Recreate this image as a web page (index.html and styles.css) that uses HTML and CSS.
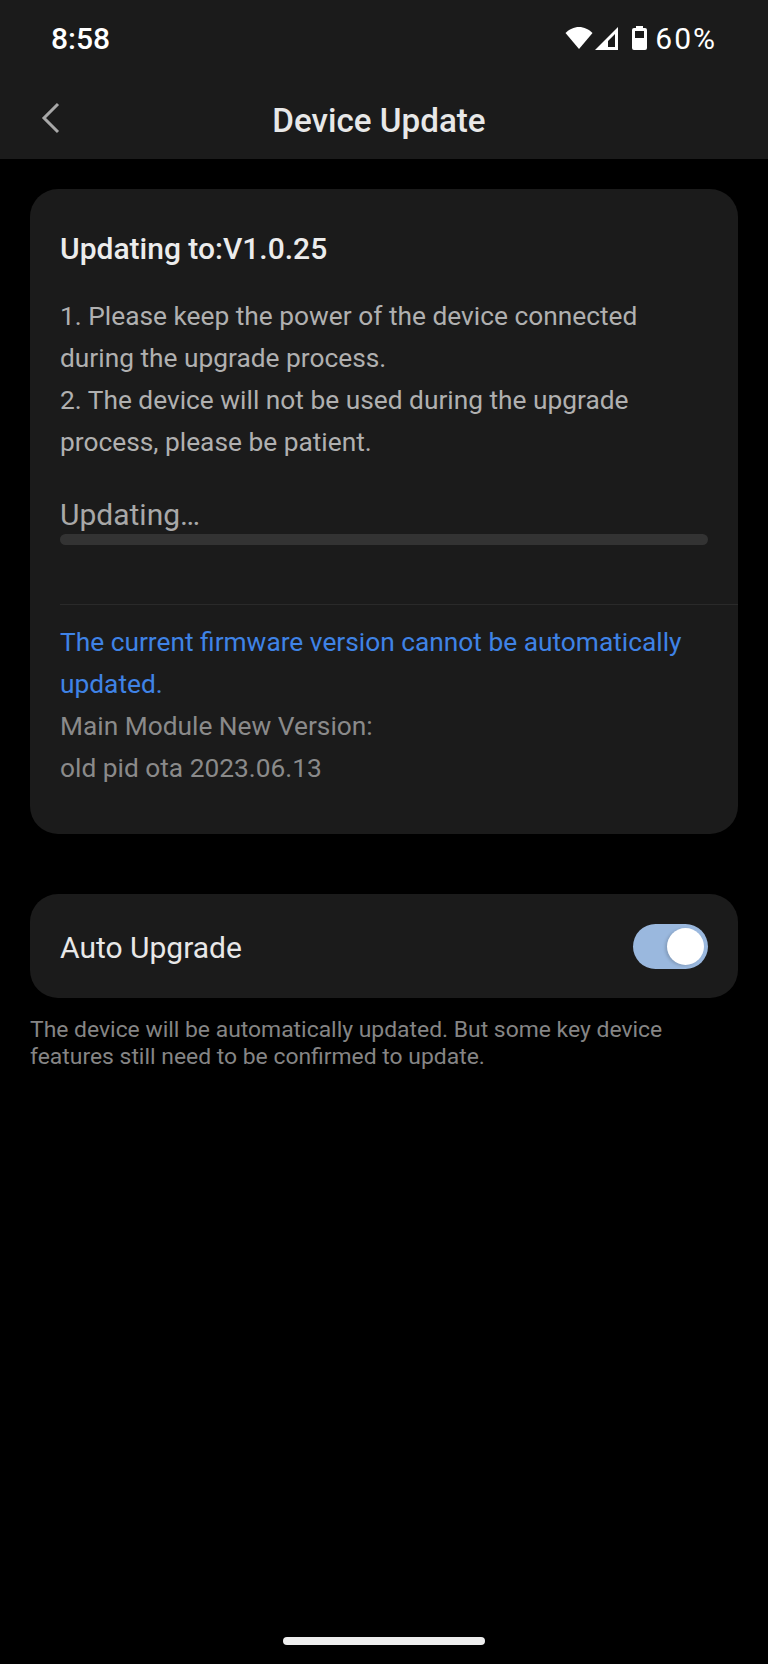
FILE: index.html
```html
<!DOCTYPE html>
<html lang="en">
<head>
<meta charset="utf-8">
<title>Device Update</title>
<link rel="stylesheet" href="styles.css">
</head>
<body>
<div class="phone">
  <header class="top">
    <div class="status">
      <span class="time">8:58</span>
      <div class="status-icons">
        <svg class="wifi" width="28" height="22" viewBox="0 0 28 22"><path d="M14 22 L0.5 6 C4 2.5 9 0 14 0 C19 0 24 2.5 27.5 6 Z" fill="#fff"/></svg>
        <svg class="signal" width="23" height="23" viewBox="0 0 23 23"><path fill-rule="evenodd" d="M23 0 V23 H0 Z M20 7 L13 14 V20 H20 Z" fill="#fff"/></svg>
        <svg class="battery" width="15" height="24" viewBox="0 0 15 24"><path fill-rule="evenodd" d="M4 0 H11 V2 H13 A2 2 0 0 1 15 4 V22 A2 2 0 0 1 13 24 H2 A2 2 0 0 1 0 22 V4 A2 2 0 0 1 2 2 H4 Z M3 5 V12 H12 V5 Z" fill="#fff"/></svg>
        <span class="pct">60%</span>
      </div>
    </div>
    <nav class="nav">
      <svg class="back" width="20" height="32" viewBox="0 0 20 32"><path d="M17 2 L3 16 L17 30" fill="none" stroke="#a8a8a8" stroke-width="3"/></svg>
      <h1 class="title">Device Update</h1>
    </nav>
  </header>
  <main class="content">
    <section class="card update">
      <h2 class="heading">Updating to:V1.0.25</h2>
      <p class="notes">1. Please keep the power of the device connected during the upgrade process.<br>2. The device will not be used during the upgrade process, please be patient.</p>
      <div class="state">Updating…</div>
      <div class="bar"></div>
      <div class="divider"></div>
      <p class="warn">The current firmware version cannot be automatically updated.</p>
      <p class="version">Main Module New Version:<br>old pid ota 2023.06.13</p>
    </section>
    <section class="card auto">
      <span class="auto-label">Auto Upgrade</span>
      <div class="toggle"><div class="knob"></div></div>
    </section>
    <p class="hint">The device will be automatically updated. But some key device features still need to be confirmed to update.</p>
  </main>
  <div class="home"></div>
</div>
</body>
</html>
```
FILE: styles.css
```css
* { box-sizing: border-box; }
html, body { margin: 0; padding: 0; background: #000; }
.phone {
  width: 768px;
  height: 1664px;
  background: #000;
  font-family: Roboto, "Noto Sans", sans-serif;
  display: flex;
  flex-direction: column;
  overflow: hidden;
}
.top { background: #1b1b1b; height: 159px; flex: none; }
.status {
  height: 76px;
  padding: 0 51px 0 51px;
  display: flex;
  justify-content: space-between;
  align-items: center;
  color: #fff;
  font-size: 30px;
}
.time { font-weight: 500; }
.status-icons { display: flex; align-items: center; }
.signal { margin-left: 2px; }
.battery { margin-left: 14px; }
.pct { margin-left: 8px; font-weight: 400; letter-spacing: 2px; }
.nav {
  height: 83px;
  padding-right: 10px;
  display: flex;
  align-items: center;
  justify-content: center;
  position: relative;
}
.back { position: absolute; left: 41px; top: 26px; }
.title { margin: 6px 0 0; font-size: 33.2px; font-weight: 500; color: #e8e8e8; }
.content { padding: 30px 30px 0; flex: 1; }
.card { background: #1b1b1b; border-radius: 28px; }
.update { height: 645px; padding: 42px 0 0 30px; }
.heading { margin: 0; font-size: 30px; line-height: 36px; font-weight: 500; color: #ececec; }
.notes { margin: 28px 30px 0 0; font-size: 26.3px; line-height: 42px; color: #b0b0b0; }
.state { margin-top: 32px; font-size: 30px; line-height: 40px; color: #a8a8a8; }
.bar { margin: -1px 30px 0 0; height: 11px; border-radius: 6px; background: #333; }
.divider { margin-top: 59px; height: 1px; background: #2a2a2a; }
.warn { margin: 16px 30px 0 0; font-size: 26.3px; line-height: 42px; color: #3f83e6; }
.version { margin: 0; font-size: 26.3px; line-height: 42px; color: #8a8a8a; }
.auto {
  margin-top: 60px;
  height: 104px;
  padding: 0 30px;
  display: flex;
  align-items: center;
  justify-content: space-between;
}
.auto-label { margin-top: 3px; font-size: 30px; color: #e8e8e8; }
.toggle {
  width: 75px;
  height: 45px;
  border-radius: 23px;
  background: #9ab8de;
  display: flex;
  align-items: center;
  justify-content: flex-end;
  padding-right: 4px;
}
.knob { width: 37px; height: 37px; border-radius: 50%; background: #fff; box-shadow: -2px 1px 3px rgba(0,0,0,0.15); }
.hint { margin: 18px 0 0; font-size: 22.9px; line-height: 27px; color: #858585; }
.home { position: absolute; left: 283px; top: 1637px; width: 202px; height: 8px; border-radius: 4px; background: #eee; }
```
